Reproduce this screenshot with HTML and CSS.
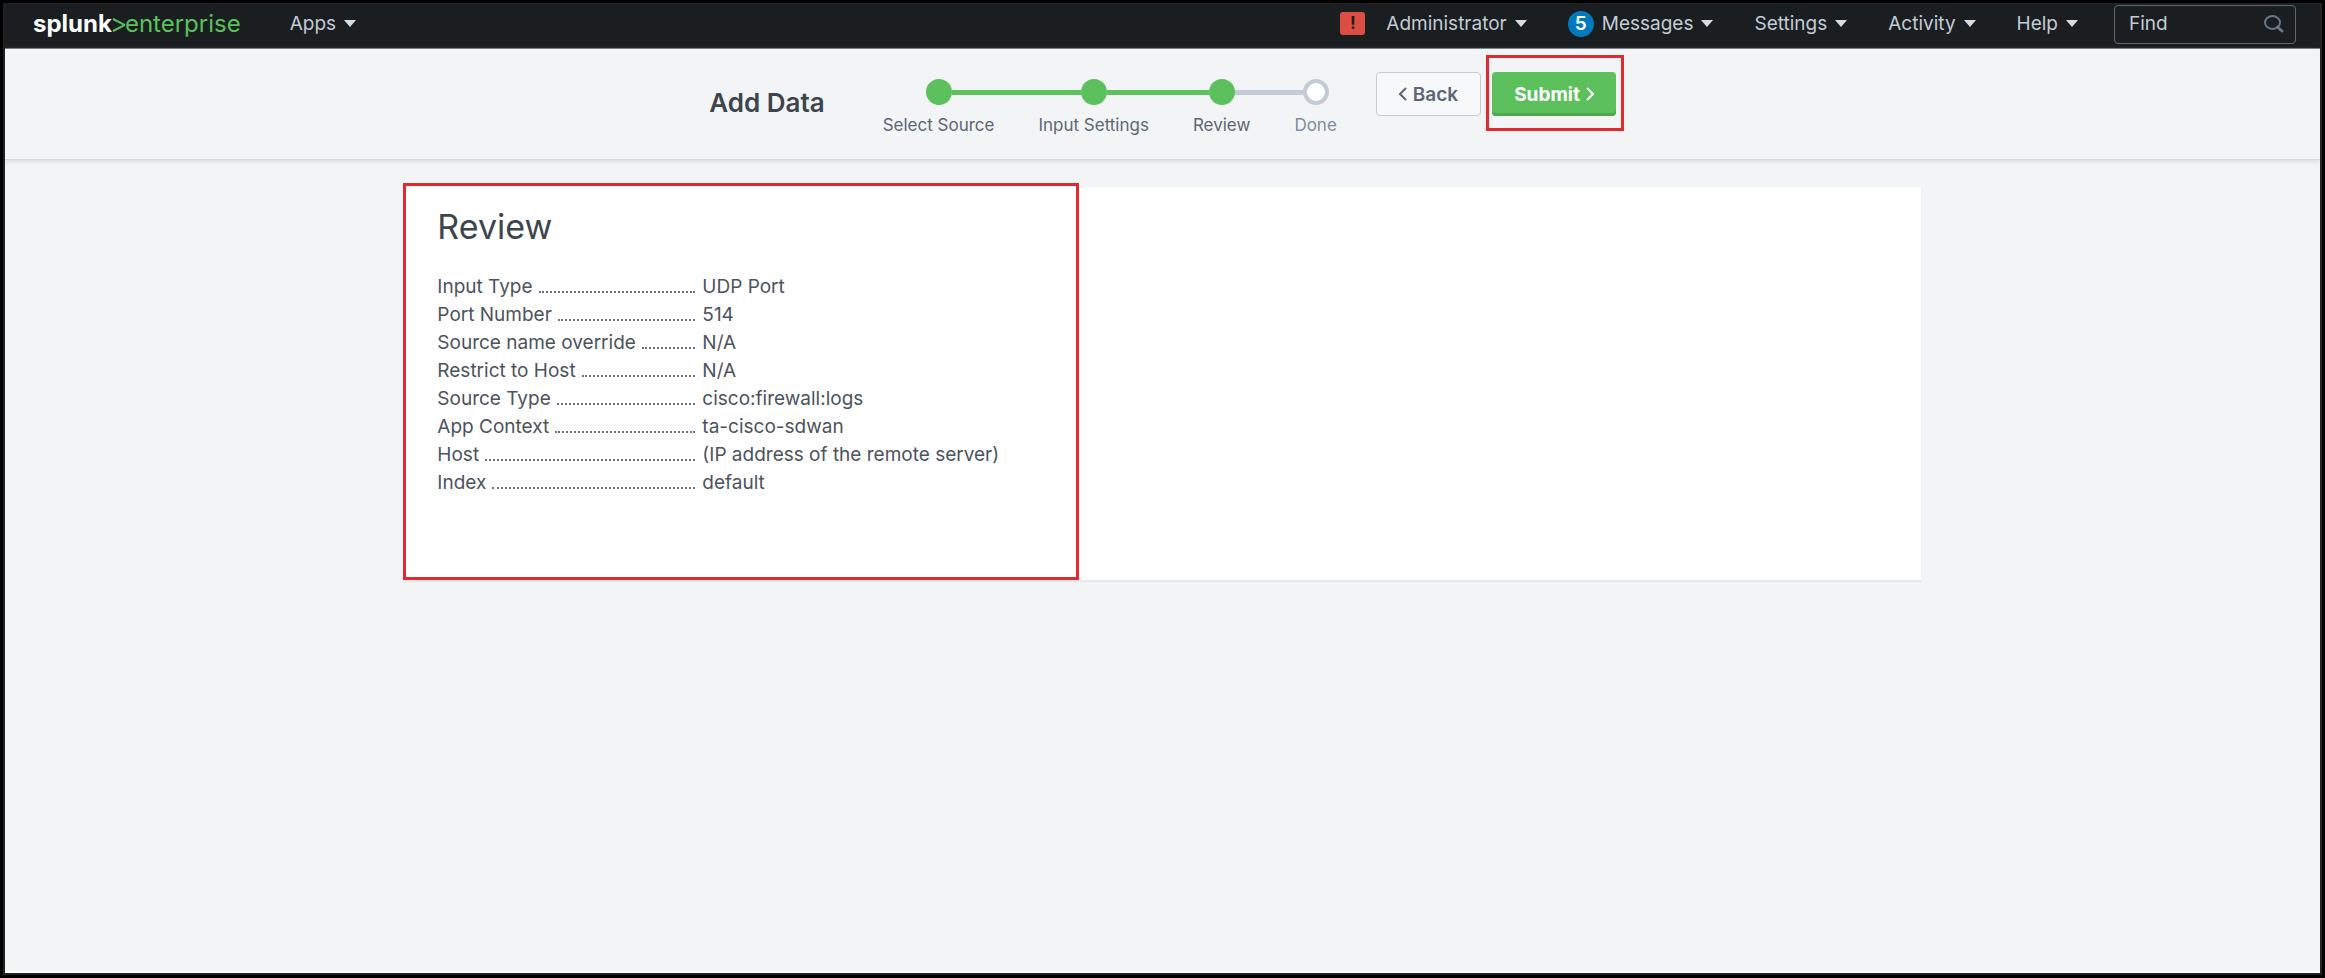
FILE: index.html
```html
<!DOCTYPE html>
<html lang="en">
<head>
    <meta charset="UTF-8">
    <meta name="viewport" content="width=device-width, initial-scale=1.0">
    <title>Add Data - Review | Splunk</title>
    <link rel="stylesheet" href="styles.css">
</head>
<body>
    <div class="page">
        <header class="navbar">
            <a class="logo" href="#"><span class="logo-name">splunk</span><svg class="logo-mark" viewBox="0 0 13 16"><path d="M1 2 L12 7.5 V8.5 L1 14" /></svg><span>enterprise</span></a>
            <button class="menu" type="button">Apps <span class="caret"></span></button>
            <nav class="nav-right">
                <button class="alert" type="button" aria-label="Health status">!</button>
                <button class="menu" type="button">Administrator <span class="caret"></span></button>
                <button class="menu" type="button"><span class="badge">5</span>Messages <span class="caret"></span></button>
                <button class="menu" type="button">Settings <span class="caret"></span></button>
                <button class="menu" type="button">Activity <span class="caret"></span></button>
                <button class="menu" type="button">Help <span class="caret"></span></button>
                <div class="find">
                    <input type="text" placeholder="Find" aria-label="Find">
                    <svg class="find-icon" viewBox="0 0 20 18"><ellipse cx="8.5" cy="7.5" rx="7.5" ry="6.5" /><path class="handle" d="M13.5 12 L18 16" /></svg>
                </div>
            </nav>
        </header>

        <div class="wizard">
            <h1>Add Data</h1>
            <ol class="steps">
                <li class="step done">
                    <div class="track"><span class="line"></span><span class="dot"></span><span class="line"></span></div>
                    <div class="step-label">Select Source</div>
                </li>
                <li class="step done">
                    <div class="track"><span class="line"></span><span class="dot"></span><span class="line"></span></div>
                    <div class="step-label">Input Settings</div>
                </li>
                <li class="step active">
                    <div class="track"><span class="line"></span><span class="dot"></span><span class="line"></span></div>
                    <div class="step-label">Review</div>
                </li>
                <li class="step">
                    <div class="track"><span class="line"></span><span class="dot"></span><span class="line"></span></div>
                    <div class="step-label">Done</div>
                </li>
            </ol>
            <div class="buttons">
                <button class="btn" type="button"><svg class="chevron" viewBox="0 0 8 14"><path d="M7 1 L1 7 L7 13" /></svg>Back</button>
                <div class="submit-wrap">
                    <button class="btn btn-primary" type="button">Submit<svg class="chevron" viewBox="0 0 8 14"><path d="M1 1 L7 7 L1 13" /></svg></button>
                </div>
            </div>
        </div>

        <main class="panel">
            <section class="review">
                <h2>Review</h2>
                <dl>
                    <dt>Input Type</dt><dd>UDP Port</dd>
                    <dt>Port Number</dt><dd>514</dd>
                    <dt>Source name override</dt><dd>N/A</dd>
                    <dt>Restrict to Host</dt><dd>N/A</dd>
                    <dt>Source Type</dt><dd>cisco:firewall:logs</dd>
                    <dt>App Context</dt><dd>ta-cisco-sdwan</dd>
                    <dt>Host</dt><dd>(IP address of the remote server)</dd>
                    <dt>Index</dt><dd>default</dd>
                </dl>
            </section>
        </main>
    </div>
</body>
</html>
```

FILE: styles.css
```css
* {
    box-sizing: border-box;
}
body {
    margin: 0;
    padding: 3px;
    min-height: 100vh;
    display: flex;
    background: #000;
    color: #3c444d;
    font-family: Inter, "Open Sans", sans-serif;
    font-size: 19px;
}
button, input {
    font: inherit;
    color: inherit;
}
.page {
    flex: 1;
    min-width: 0;
    overflow: hidden;
    border: 2px solid #212121;
    background: #f2f4f5;
    box-shadow: inset 0 -2px #fff;
}

/* top bar */
.navbar {
    display: flex;
    align-items: center;
    height: 44px;
    padding: 0 24px 6px 28px;
    background: #1a1e21;
    border-bottom: 1px solid #70757a;
    color: #c3cbd4;
}
.logo {
    display: flex;
    align-items: center;
    margin-right: 49px;
    color: #5cc05c;
    font-size: 24px;
    line-height: 28px;
    text-decoration: none;
}
.logo-name {
    color: #fff;
    font-weight: 700;
}
.logo-mark {
    width: 13px;
    height: 16px;
    margin-top: 2px;
    fill: none;
    stroke: #5cc05c;
    stroke-width: 2;
}
.menu {
    display: flex;
    align-items: center;
    padding: 0;
    border: 0;
    background: none;
    white-space: nowrap;
}
.caret {
    margin-left: 8px;
    border: 6px solid transparent;
    border-top: 7px solid #d6dce3;
    border-bottom: 0;
}
.nav-right {
    display: flex;
    align-items: center;
    gap: 41px;
    margin-left: auto;
}
.alert {
    width: 25px;
    height: 23px;
    margin-right: -20px;
    padding: 0;
    border: 0;
    border-radius: 3px;
    background: #dc4e41;
    color: #1a1e21;
    font-size: 17px;
    font-weight: 700;
    line-height: 23px;
}
.badge {
    width: 26px;
    height: 26px;
    margin-right: 8px;
    border-radius: 50%;
    background: #007abd;
    color: #fff;
    font-weight: 600;
    line-height: 26px;
}
.find {
    display: flex;
    align-items: center;
    width: 182px;
    height: 39px;
    margin: 2px 0 0 -5px;
    padding: 0 11px 2px 14px;
    border: 1px solid #5c6773;
    border-radius: 4px;
}
.find input {
    flex: 1;
    min-width: 0;
    padding: 0;
    border: 0;
    background: none;
}
.find input::placeholder {
    color: #c3cbd4;
    opacity: 1;
}
.find-icon {
    width: 20px;
    height: 18px;
    fill: none;
    stroke: #6b7785;
    stroke-width: 2;
}
.find-icon .handle {
    stroke-width: 3;
    stroke-linecap: round;
}

/* wizard header */
.wizard {
    display: flex;
    justify-content: center;
    align-items: center;
    height: 111px;
    border-bottom: 1px solid #d5dbe1;
    box-shadow: 0 2px 4px #d9dee3;
}
.wizard h1 {
    margin: 0 36px 4px 0;
    font-size: 26px;
    font-weight: 600;
}
.steps {
    display: flex;
    margin: 8px 17px 0 0;
    padding: 0;
    list-style: none;
}
.track {
    display: flex;
    align-items: center;
}
.line {
    flex: 1;
    height: 5px;
    background: #c3cbd4;
}
.dot {
    width: 26px;
    height: 26px;
    border: 4px solid #c3cbd4;
    border-radius: 50%;
    background: #fff;
}
.done .line,
.active .line:first-child {
    background: #5cc05c;
}
.done .dot,
.active .dot {
    border-color: #5cc05c;
    background: #5cc05c;
}
.step:first-child .line:first-child,
.step:last-child .line:last-child {
    background: none;
}
.step-label {
    padding: 8px 22px 0;
    color: #818d99;
    font-size: 17px;
    line-height: 24px;
}
.done .step-label,
.active .step-label {
    color: #5c6773;
}
.buttons {
    display: flex;
    align-self: flex-start;
    gap: 11px;
    margin-top: 23px;
}
.btn {
    display: flex;
    align-items: center;
    gap: 6px;
    height: 44px;
    padding: 0 22px;
    border: 1px solid #c3cbd4;
    border-radius: 4px;
    background: #f7f8fa;
    color: #5c6773;
    font-weight: 600;
}
.btn-primary {
    border: 0;
    background: #5cc05c;
    box-shadow: inset 0 -3px #4fa84f;
    color: #fff;
    font-weight: 700;
}
.chevron {
    width: 8px;
    height: 14px;
    fill: none;
    stroke: currentColor;
    stroke-width: 2;
}
.submit-wrap {
    position: relative;
}
/* red highlight around the submit button */
.submit-wrap::after {
    content: "";
    position: absolute;
    inset: -17px -8px -15px -6px;
    border: 3px solid #df2a30;
    pointer-events: none;
}

/* review */
.panel {
    width: 65.5%;
    margin: 27px auto 0;
    background: #fff;
    box-shadow: 0 2px 1px #e6e9ec;
}
.review {
    position: relative;
    width: 675px;
    max-width: 100%;
    padding: 20px 33px 83px;
}
.review::after {
    content: "";
    position: absolute;
    inset: -4px 0 0 -1px;
    border: 3px solid #df2a30;
    pointer-events: none;
}
.review h2 {
    margin: 0 0 26px;
    font-size: 34px;
    font-weight: 400;
    line-height: 40px;
}
.review dl {
    display: grid;
    grid-template-columns: 258px 1fr;
    column-gap: 7px;
    margin: 0;
    color: #4c535c;
    line-height: 28px;
}
.review dt {
    display: flex;
    align-items: baseline;
    gap: 6px;
    white-space: nowrap;
}
.review dt::after {
    content: "";
    flex: 1;
    border-bottom: 2px dotted #6b7380;
}
.review dd {
    margin: 0;
}
```
